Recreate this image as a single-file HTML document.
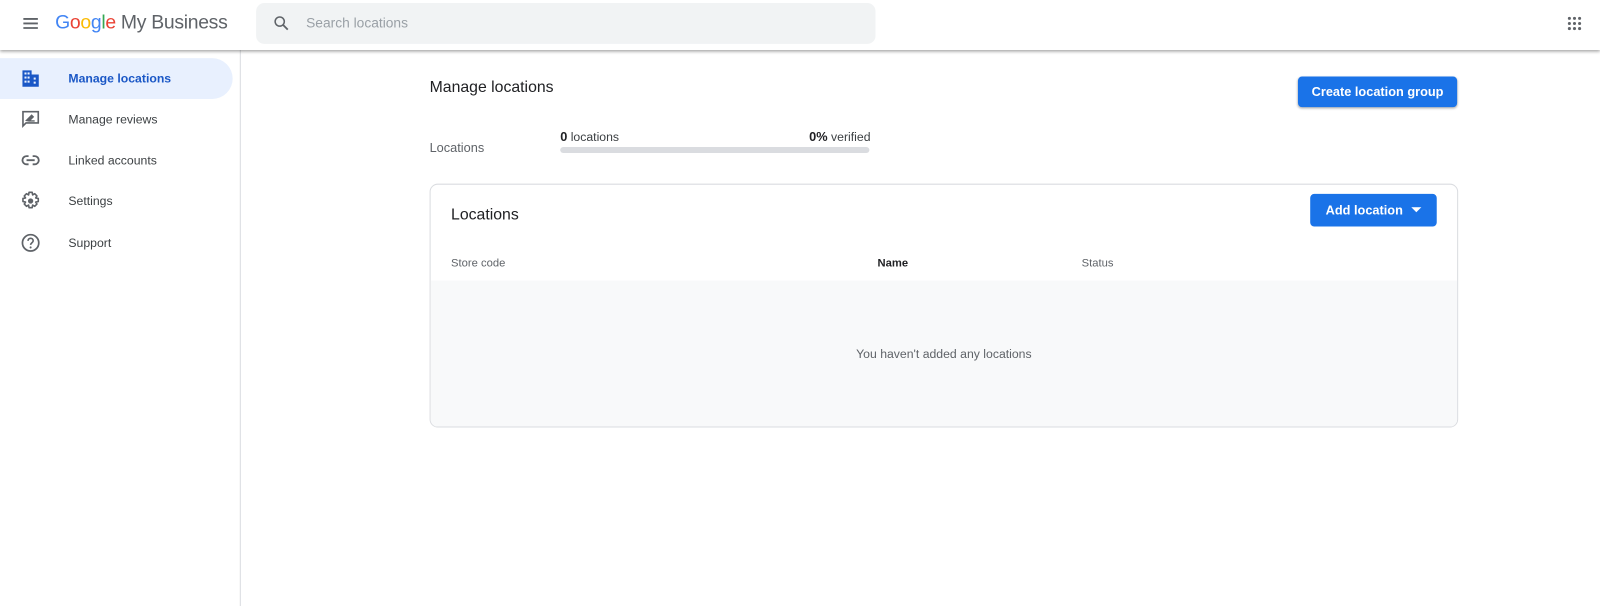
<!DOCTYPE html>
<html><head><meta charset="utf-8"><style>
*{box-sizing:border-box;margin:0;padding:0}
body{width:1600px;height:606px;overflow:hidden;background:#fff;font-family:"Liberation Sans",Arial,sans-serif;color:#3c4043;position:relative}
#w{position:absolute;left:0;top:0;width:1568px;height:594px;transform:scale(1.020408);transform-origin:0 0}
.hdr{position:absolute;left:0;top:0;width:1568px;height:49px;background:#fff;box-shadow:0 2px 3px rgba(0,0,0,.35);z-index:2}
.side{position:absolute;left:0;top:49px;width:236px;height:545px;border-right:1px solid #dadce0}
.nav{position:absolute;left:0;height:40px;width:228px;display:flex;align-items:center;font-size:12px;color:#3c4043}
.nav svg{position:absolute;left:20px;top:10px}
.nav span{position:absolute;left:67px}
.act{background:#e8f0fe;border-radius:0 20px 20px 0;color:#1a57c6;font-weight:bold}
.btn{position:absolute;background:#1a73e8;color:#fff;font-weight:bold;font-size:12.5px;border-radius:4px;display:flex;align-items:center;justify-content:center;box-shadow:0 1px 2px rgba(0,0,0,.3)}
</style></head><body><div id="w">
<div class="hdr">
 <svg style="position:absolute;left:22px;top:15px" width="16" height="16" viewBox="0 0 18 18"><path d="M1 4h16M1 9h16M1 14h16" stroke="#5f6368" stroke-width="2"/></svg>
 <div style="position:absolute;left:54px;top:12px;font-size:19px;letter-spacing:-.3px"><span style="color:#4285f4">G</span><span style="color:#ea4335">o</span><span style="color:#fbbc05">o</span><span style="color:#4285f4">g</span><span style="color:#34a853">l</span><span style="color:#ea4335">e</span><span style="color:#5f6368"> My Business</span></div>
 <div style="position:absolute;left:251px;top:3px;width:607px;height:40px;background:#f1f3f4;border-radius:8px">
  <svg style="position:absolute;left:16px;top:11px" width="18" height="18" viewBox="0 0 24 24"><circle cx="9.5" cy="9.5" r="6" fill="none" stroke="#5f6368" stroke-width="2"/><path d="M14 14l6 6" stroke="#5f6368" stroke-width="2.4"/></svg>
  <span style="position:absolute;left:49px;top:12px;font-size:13.5px;color:#9aa0a6">Search locations</span>
 </div>
 <svg style="position:absolute;left:1536px;top:16px" width="14" height="14" viewBox="0 0 14 14" fill="#5f6368"><circle cx="2" cy="2" r="1.5"/><circle cx="7" cy="2" r="1.5"/><circle cx="12" cy="2" r="1.5"/><circle cx="2" cy="7" r="1.5"/><circle cx="7" cy="7" r="1.5"/><circle cx="12" cy="7" r="1.5"/><circle cx="2" cy="12" r="1.5"/><circle cx="7" cy="12" r="1.5"/><circle cx="12" cy="12" r="1.5"/></svg>
</div>
<div class="side">
 <div class="nav act" style="top:8px"><svg width="20" height="20" viewBox="0 0 20 20"><path d="M2 2h9v16H2z M11 6h7v12h-7z" fill="#1a57c6"/><g fill="#e8f0fe"><rect x="4" y="4" width="2" height="2"/><rect x="7" y="4" width="2" height="2"/><rect x="4" y="8" width="2" height="2"/><rect x="7" y="8" width="2" height="2"/><rect x="4" y="12" width="2" height="2"/><rect x="7" y="12" width="2" height="2"/><rect x="13" y="9" width="2" height="2"/><rect x="13" y="13" width="2" height="2"/></g></svg><span>Manage locations</span></div>
 <div class="nav" style="top:48px"><svg width="20" height="20" viewBox="0 0 20 20"><path d="M2.5 2.5h15v11h-12l-3 3z" fill="none" stroke="#5f6368" stroke-width="1.6"/><path d="M6 11l5-5 1.5 1.5-4 4zM9 11.5h5" stroke="#5f6368" stroke-width="1.4" fill="#5f6368"/></svg><span>Manage reviews</span></div>
 <div class="nav" style="top:88px"><svg width="20" height="20" viewBox="0 0 20 20"><path d="M8 6H6a4 4 0 000 8h2M12 6h2a4 4 0 010 8h-2M6 10h8" fill="none" stroke="#5f6368" stroke-width="1.8"/></svg><span>Linked accounts</span></div>
 <div class="nav" style="top:128px"><svg width="20" height="20" viewBox="0 0 20 20"><path d="M8.5 1.5h3l.5 2.5 2-1.2 2.2 2.2-1.2 2 2.5.5v3l-2.5.5 1.2 2-2.2 2.2-2-1.2-.5 2.5h-3l-.5-2.5-2 1.2-2.2-2.2 1.2-2-2.5-.5v-3l2.5-.5-1.2-2 2.2-2.2 2 1.2z" fill="none" stroke="#5f6368" stroke-width="1.6" stroke-linejoin="round"/><circle cx="10" cy="10" r="2.6" fill="#5f6368"/></svg><span>Settings</span></div>
 <div class="nav" style="top:169px"><svg width="20" height="20" viewBox="0 0 20 20"><circle cx="10" cy="10" r="8" fill="none" stroke="#5f6368" stroke-width="1.7"/><path d="M7.5 8a2.5 2.5 0 015 0c0 1.8-2.5 2-2.5 4" fill="none" stroke="#5f6368" stroke-width="1.6"/><circle cx="10" cy="14.5" r="1" fill="#5f6368"/></svg><span>Support</span></div>
</div>
<div style="position:absolute;left:421px;top:77px;font-size:15.5px;color:#202124">Manage locations</div>
<div class="btn" style="left:1272px;top:75px;width:156px;height:30px">Create location group</div>
<div style="position:absolute;left:421px;top:138px;font-size:12.5px;color:#5f6368">Locations</div>
<div style="position:absolute;left:549px;top:127px;font-size:12px;color:#3c4043"><b style="font-size:12.5px;color:#202124">0</b> locations</div>
<div style="position:absolute;left:793px;top:127px;font-size:12px;color:#3c4043"><b style="font-size:12.5px;color:#202124">0%</b> verified</div>
<div style="position:absolute;left:549px;top:144px;width:303px;height:6px;background:#dadce0;border-radius:3px"></div>
<div style="position:absolute;left:421px;top:180px;width:1008px;height:239px;border:1px solid #dadce0;border-radius:8px;overflow:hidden">
 <div style="position:absolute;left:20px;top:21px;font-size:15.5px;color:#202124">Locations</div>
 <div class="btn" style="left:862px;top:9px;width:124px;height:32px;box-shadow:none">Add location<svg style="margin-left:8px" width="10" height="6" viewBox="0 0 10 6"><path d="M0 0h10L5 5z" fill="#fff"/></svg></div>
 <div style="position:absolute;left:20px;top:71px;font-size:11px;color:#5f6368">Store code</div>
 <div style="position:absolute;left:438px;top:71px;font-size:11px;color:#202124;font-weight:bold">Name</div>
 <div style="position:absolute;left:638px;top:71px;font-size:11px;color:#5f6368">Status</div>
 <div style="position:absolute;left:0;top:94px;width:100%;height:145px;background:#f8f9fa"></div>
 <div style="position:absolute;left:0;top:159px;width:100%;text-align:center;font-size:12px;color:#5f6368">You haven't added any locations</div>
</div>
</div></body></html>
